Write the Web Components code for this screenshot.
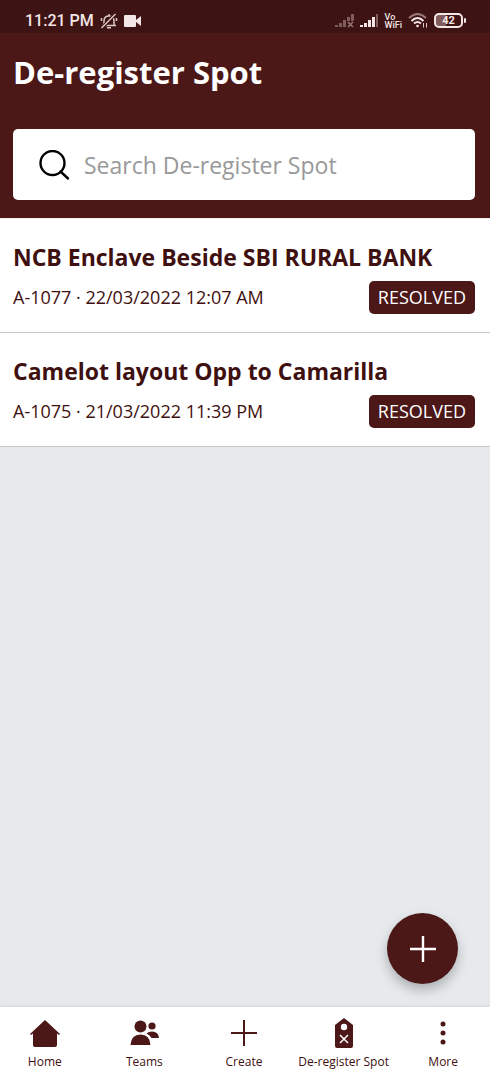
<!DOCTYPE html>
<html lang="en">
<head>
<meta charset="utf-8">
<meta name="viewport" content="width=device-width, initial-scale=1">
<title>De-register Spot</title>
<style>
  html, body { margin: 0; height: 100%; }
  body {
    --brand: #4b1717;
    --ink: #3f1010;
    font-family: "Open Sans", "Noto Sans", sans-serif;
    color: var(--ink);
    background: #e6eaed;
  }
</style>
</head>
<body>
<spot-app></spot-app>
<script>
const define = (name, html) => {
  const template = document.createElement('template');
  template.innerHTML = html;
  customElements.define(name, class extends HTMLElement {
    constructor() {
      super();
      this.attachShadow({ mode: 'open' }).append(template.content.cloneNode(true));
    }
  });
};

define('status-bar', `
  <style>
    :host { display: flex; justify-content: space-between; align-items: center; height: 33px; padding: 8px 24px 0 25px; box-sizing: border-box; background: #3e1313; color: #f3e6e6; font-family: Roboto, sans-serif; }
    .group { display: flex; align-items: center; gap: 6px; }
    time { font-size: 16px; font-weight: 500; line-height: 20px; }
    .vo { font-size: 9px; font-weight: 500; line-height: 8px; }
    .battery { display: flex; align-items: center; }
    .cell { box-sizing: border-box; width: 29px; height: 15px; border: 2px solid #f3e6e6; border-radius: 5px; font-size: 11px; font-weight: 700; line-height: 11px; text-align: center; background: linear-gradient(90deg, #805c5c 42%, transparent 42%); }
    .cap { width: 2px; height: 5px; margin-left: 1px; background: #f3e6e6; border-radius: 1px; }
    svg { display: block; }
  </style>
  <div class="group">
    <time>11:21 PM</time>
    <svg width="18" height="16" viewBox="0 0 18 16" fill="none" stroke="#dccaca" stroke-width="1.5" aria-label="Muted"><path d="M4 12V8Q4 3 9 3Q14 3 14 8V12M2 12.500H16M7 14.700H11M9 3V1M1.500 5V8M16.500 5V8"/><path d="M16 0L2 15" stroke="#3e1313" stroke-width="3.500"/><path d="M15.500 1L1.500 15"/></svg>
    <svg width="18" height="12" viewBox="0 0 18 12" fill="#f3e6e6" aria-label="Recording"><rect width="12" height="12" rx="1"/><path d="M12 5L17 1V11L12 7Z"/></svg>
  </div>
  <div class="group">
    <svg width="19" height="14" viewBox="0 0 19 14" fill="#805c5c" aria-label="No signal"><path d="M0 11H3V13H0ZM4 9H7V13H4ZM8 6H11V13H8ZM12 3H15V7H12ZM16 0H19V7H16Z"/><path d="M13 8L18 13M18 8L13 13" stroke="#9a7878" stroke-width="1.500"/></svg>
    <svg width="19" height="14" viewBox="0 0 19 14" fill="#f3e6e6" aria-label="Signal"><path d="M0 11H3V13H0ZM4 9H7V13H4ZM8 6H11V13H8ZM12 3H15V13H12Z"/><path d="M16 0H18V13H16Z" fill="#805c5c"/></svg>
    <div class="vo">Vo<br>WiFi</div>
    <svg width="20" height="15" viewBox="0 0 20 15" fill="none" stroke="#f3e6e6" stroke-width="2" aria-label="Wi-Fi"><path d="M1 5Q9.500-3 18 5" stroke="#9a7878"/><path d="M3.500 8Q9.500 2 15.500 8M6 10.500Q9.500 7.500 13 10.500"/><circle cx="9.500" cy="13" r="1.300" fill="#f3e6e6" stroke="none"/><path d="M15.500 14.500V10M18.500 10V14.500" stroke-width="1" stroke="#dccaca"/></svg>
    <div class="battery"><div class="cell">42</div><div class="cap"></div></div>
  </div>
`);

define('page-header', `
  <style>
    :host { display: block; padding: 16px 15px 18px 13px; background: var(--brand); color: #fff; }
    h1 { margin: 0 0 34px; font-size: 31px; line-height: 46px; font-weight: 700; }
    label { display: flex; align-items: center; gap: 15px; height: 71px; padding: 0 26px; box-sizing: border-box; background: #fff; border-radius: 5px; }
    svg { flex: none; }
    input { flex: 1; min-width: 0; border: 0; padding: 0; outline: 0; background: none; font: inherit; font-size: 23px; line-height: 32px; color: var(--ink); }
    input::placeholder { color: #999; opacity: 1; }
  </style>
  <h1>De-register Spot</h1>
  <label>
    <svg width="30" height="30" viewBox="0 0 30 30" fill="none" stroke="#000" stroke-width="2.400" stroke-linecap="round" aria-hidden="true"><circle cx="13.500" cy="13" r="12"/><path d="M21.500 21.500L29 28.500"/></svg>
    <input type="text" placeholder="Search De-register Spot" aria-label="Search De-register Spot">
  </label>
`);

define('spot-item', `
  <style>
    :host { display: block; padding: 22px 15px 18px 13px; background: #fff; border-bottom: 1px solid #c8c8c8; }
    h2 { margin: 0 0 7px; font-size: 23px; line-height: 33px; font-weight: 700; }
    .row { display: flex; justify-content: space-between; align-items: center; font-size: 18px; line-height: 33px; }
    .badge { padding: 0 9px; border-radius: 5px; background: var(--brand); color: #fff; }
  </style>
  <h2><slot></slot></h2>
  <div class="row"><slot name="meta"></slot><span class="badge"><slot name="status"></slot></span></div>
`);

define('nav-item', `
  <style>
    :host { display: block; min-width: 0; }
    a { display: flex; flex-direction: column; align-items: center; gap: 5px; color: inherit; text-decoration: none; font-size: 12px; line-height: 18px; white-space: nowrap; }
    ::slotted(svg) { display: block; }
  </style>
  <a href="#"><slot name="icon"></slot><span><slot></slot></span></a>
`);

define('spot-app', `
  <style>
    :host { display: flex; flex-direction: column; min-height: 100vh; }
    main { flex: 1; display: flex; flex-direction: column; border-top: 1px solid #f4eeee; }
    .fab { display: grid; place-items: center; width: 71px; height: 71px; margin: auto 32px 23px auto; padding: 0; border: 0; border-radius: 50%; background: var(--brand); box-shadow: 0 6px 12px rgba(0,0,0,.25); }
    nav { overflow: hidden; background: #fff; box-shadow: 0 -1px 3px rgba(0,0,0,.08); padding: 10px 0 5px; }
    .tabs { display: grid; grid-template-columns: repeat(5, 1fr); margin: 0 -3px 0 -5px; }
  </style>
  <status-bar></status-bar>
  <page-header></page-header>
  <main>
    <spot-item>NCB Enclave Beside SBI RURAL BANK<span slot="meta">A-1077 · 22/03/2022 12:07 AM</span><span slot="status">RESOLVED</span></spot-item>
    <spot-item>Camelot layout Opp to Camarilla<span slot="meta">A-1075 · 21/03/2022 11:39 PM</span><span slot="status">RESOLVED</span></spot-item>
    <button class="fab" aria-label="Create"><svg width="26" height="26" viewBox="0 0 26 26" stroke="#fff" stroke-width="2.400"><path d="M13 0V26M0 13H26"/></svg></button>
  </main>
  <nav>
    <div class="tabs">
      <nav-item><svg slot="icon" width="32" height="31" viewBox="0 0 32 31" fill="#4b1717"><path d="M16 3L31 17L30 18L28 16.500V28Q28 30 26 30H6Q4 30 4 28V16.500L2 18L1 17Z"/></svg>Home</nav-item>
      <nav-item><svg slot="icon" width="32" height="31" viewBox="0 0 32 31" fill="#4b1717"><circle cx="12.500" cy="9.500" r="6"/><path d="M2.500 28Q3 17.500 12.500 17.500Q22 17.500 22.500 28Z"/><circle cx="24" cy="9" r="3.600"/><path d="M18.500 16.500Q20.500 14.500 24 14.500Q30.500 14.500 31 21H23.500Q22 18 18.500 16.500Z"/></svg>Teams</nav-item>
      <nav-item><svg slot="icon" width="32" height="31" viewBox="0 0 32 31" stroke="#4b1717" stroke-width="2"><path d="M16 3V29M3 16H29"/></svg>Create</nav-item>
      <nav-item><svg slot="icon" width="32" height="31" viewBox="0 0 32 31" fill="#4b1717"><path d="M16 1L25 8V29Q25 31 23 31H9Q7 31 7 29V8Z"/><circle cx="16" cy="10" r="3.200" fill="#fff"/><path d="M12 18L20 26M20 18L12 26" stroke="#fff" stroke-width="1.500"/></svg>De-register Spot</nav-item>
      <nav-item><svg slot="icon" width="32" height="31" viewBox="0 0 32 31" fill="#4b1717"><circle cx="16" cy="7" r="2.500"/><circle cx="16" cy="16" r="2.500"/><circle cx="16" cy="25" r="2.500"/></svg>More</nav-item>
    </div>
  </nav>
`);
</script>
</body>
</html>
